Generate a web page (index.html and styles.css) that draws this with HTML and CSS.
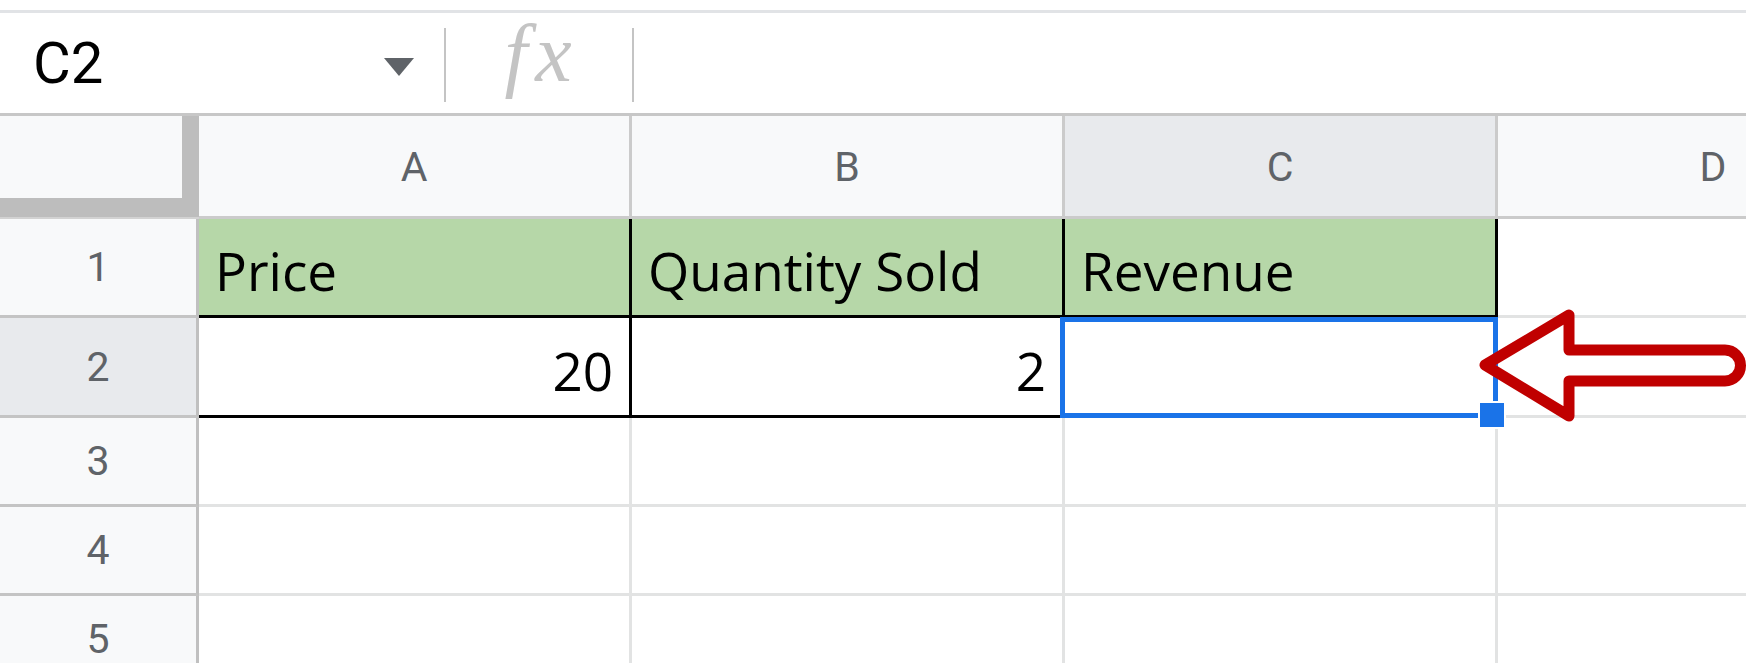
FILE: index.html
```html
<!DOCTYPE html>
<html lang="en">
<head>
<meta charset="utf-8">
<title>Sheet</title>
<link rel="stylesheet" href="styles.css">
</head>
<body>
<div class="app">
  <div class="top-strip"></div>
  <div class="formula-bar">
    <div class="name-box">
      <span class="cell-ref">C2</span>
      <svg class="dropdown" viewBox="0 0 30 18" width="30" height="18" aria-hidden="true"><polygon points="0,0 30,0 15,18" fill="#5f6368"/></svg>
    </div>
    <div class="divider"></div>
    <div class="fx-box"><span class="fx">fx</span></div>
    <div class="divider"></div>
    <div class="formula-input"></div>
  </div>
  <div class="sheet">
    <div class="corner"><div class="corner-inner"></div></div>
    <div class="col-head">A</div>
    <div class="col-head">B</div>
    <div class="col-head sel">C</div>
    <div class="col-head">D</div>

    <div class="row-head">1</div>
    <div class="cell green edge-r edge-b">Price</div>
    <div class="cell green edge-r edge-b">Quantity Sold</div>
    <div class="cell green edge-r edge-b">Revenue</div>
    <div class="cell"></div>

    <div class="row-head sel">2</div>
    <div class="cell num edge-r edge-b">20</div>
    <div class="cell num edge-r edge-b">2</div>
    <div class="cell active edge-b"><div class="selection"></div><div class="handle"></div></div>
    <div class="cell"></div>

    <div class="row-head">3</div>
    <div class="cell"></div>
    <div class="cell"></div>
    <div class="cell"></div>
    <div class="cell"></div>

    <div class="row-head">4</div>
    <div class="cell"></div>
    <div class="cell"></div>
    <div class="cell"></div>
    <div class="cell"></div>

    <div class="row-head">5</div>
    <div class="cell"></div>
    <div class="cell"></div>
    <div class="cell"></div>
    <div class="cell"></div>
  </div>
  <svg class="arrow" width="286" height="140" viewBox="1460 295 286 140" aria-hidden="true">
    <path d="M1485,365 L1569,315 L1569,350 L1725,350 A15.5,15.5 0 0 1 1725,381 L1569,381 L1569,416 Z" fill="none" stroke="#c00000" stroke-width="11" stroke-linejoin="round"/>
  </svg>
</div>
</body>
</html>
```

FILE: styles.css
```css
* { box-sizing: border-box; }

html, body {
  margin: 0;
  padding: 0;
  background: #ffffff;
}

body {
  width: 1746px;
  height: 663px;
  overflow: hidden;
  font-family: Roboto, "Liberation Sans", sans-serif;
}

.app {
  width: 1746px;
  height: 663px;
  overflow: hidden;
}

.top-strip {
  height: 10px;
  background: #ffffff;
}

.formula-bar {
  display: flex;
  height: 106px;
  border-top: 3px solid #e1e3e6;
  border-bottom: 3px solid #c7c7c7;
  background: #ffffff;
}

.name-box {
  width: 444px;
  display: flex;
  align-items: center;
  padding: 0 30px 0 33px;
}

.cell-ref {
  font-family: Roboto, sans-serif;
  font-size: 58px;
  line-height: 58px;
  color: #000000;
}

.dropdown {
  margin-left: auto;
  margin-top: 8px;
  display: block;
}

.divider {
  width: 2px;
  height: 74px;
  margin-top: 15px;
  background: #c4c4c4;
}

.fx-box {
  width: 186px;
  display: flex;
  justify-content: center;
  align-items: flex-start;
}

.fx {
  font-family: "Liberation Serif", serif;
  font-style: italic;
  font-size: 82px;
  line-height: 82px;
  letter-spacing: 8px;
  color: #c4c4c4;
  padding-left: 6px;
}

.formula-input {
  flex: 1;
}

.sheet {
  display: grid;
  grid-template-columns: 199px 433px 433px 433px 433px;
  grid-template-rows: 103px 99px 100px 89px 89px 89px;
}

.corner {
  background: #bdbdbd;
  padding: 0 17px 19px 0;
  border-bottom: 2px solid #d2d2d2;
}

.corner-inner {
  width: 100%;
  height: 100%;
  background: #f8f9fa;
}

.col-head {
  background: #f8f9fa;
  border-right: 3px solid #cbcbcb;
  border-bottom: 3px solid #cbcbcb;
  display: flex;
  align-items: center;
  justify-content: center;
  font-family: Roboto, sans-serif;
  font-size: 41px;
  color: #5f6368;
  padding-top: 2px;
}

.row-head {
  background: #f8f9fa;
  border-right: 3px solid #c0c0c0;
  border-bottom: 3px solid #c4c4c4;
  display: flex;
  align-items: center;
  justify-content: center;
  font-family: Roboto, sans-serif;
  font-size: 41px;
  color: #5f6368;
}

.col-head.sel,
.row-head.sel {
  background: #e8eaed;
}

.cell {
  border-right: 3px solid #e2e3e3;
  border-bottom: 3px solid #e2e3e3;
  display: flex;
  align-items: flex-end;
  padding: 0 16px 18px 16px;
  font-family: "Open Sans", sans-serif;
  font-size: 53px;
  line-height: 53px;
  color: #000000;
  white-space: nowrap;
}

.cell.num {
  justify-content: flex-end;
}

.cell.green {
  background: #b6d7a8;
}

.cell.edge-r {
  border-right-color: #000000;
}

.cell.edge-b {
  border-bottom-color: #000000;
}

.cell.active {
  position: relative;
}

.selection {
  position: absolute;
  left: -5px;
  top: -1px;
  right: -3px;
  bottom: -3px;
  border: 5px solid #1a73e8;
}

.handle {
  position: absolute;
  right: -11px;
  bottom: -14px;
  width: 28px;
  height: 28px;
  background: #1a73e8;
  border: 2px solid #ffffff;
}

.arrow {
  position: absolute;
  left: 1460px;
  top: 295px;
}
```
